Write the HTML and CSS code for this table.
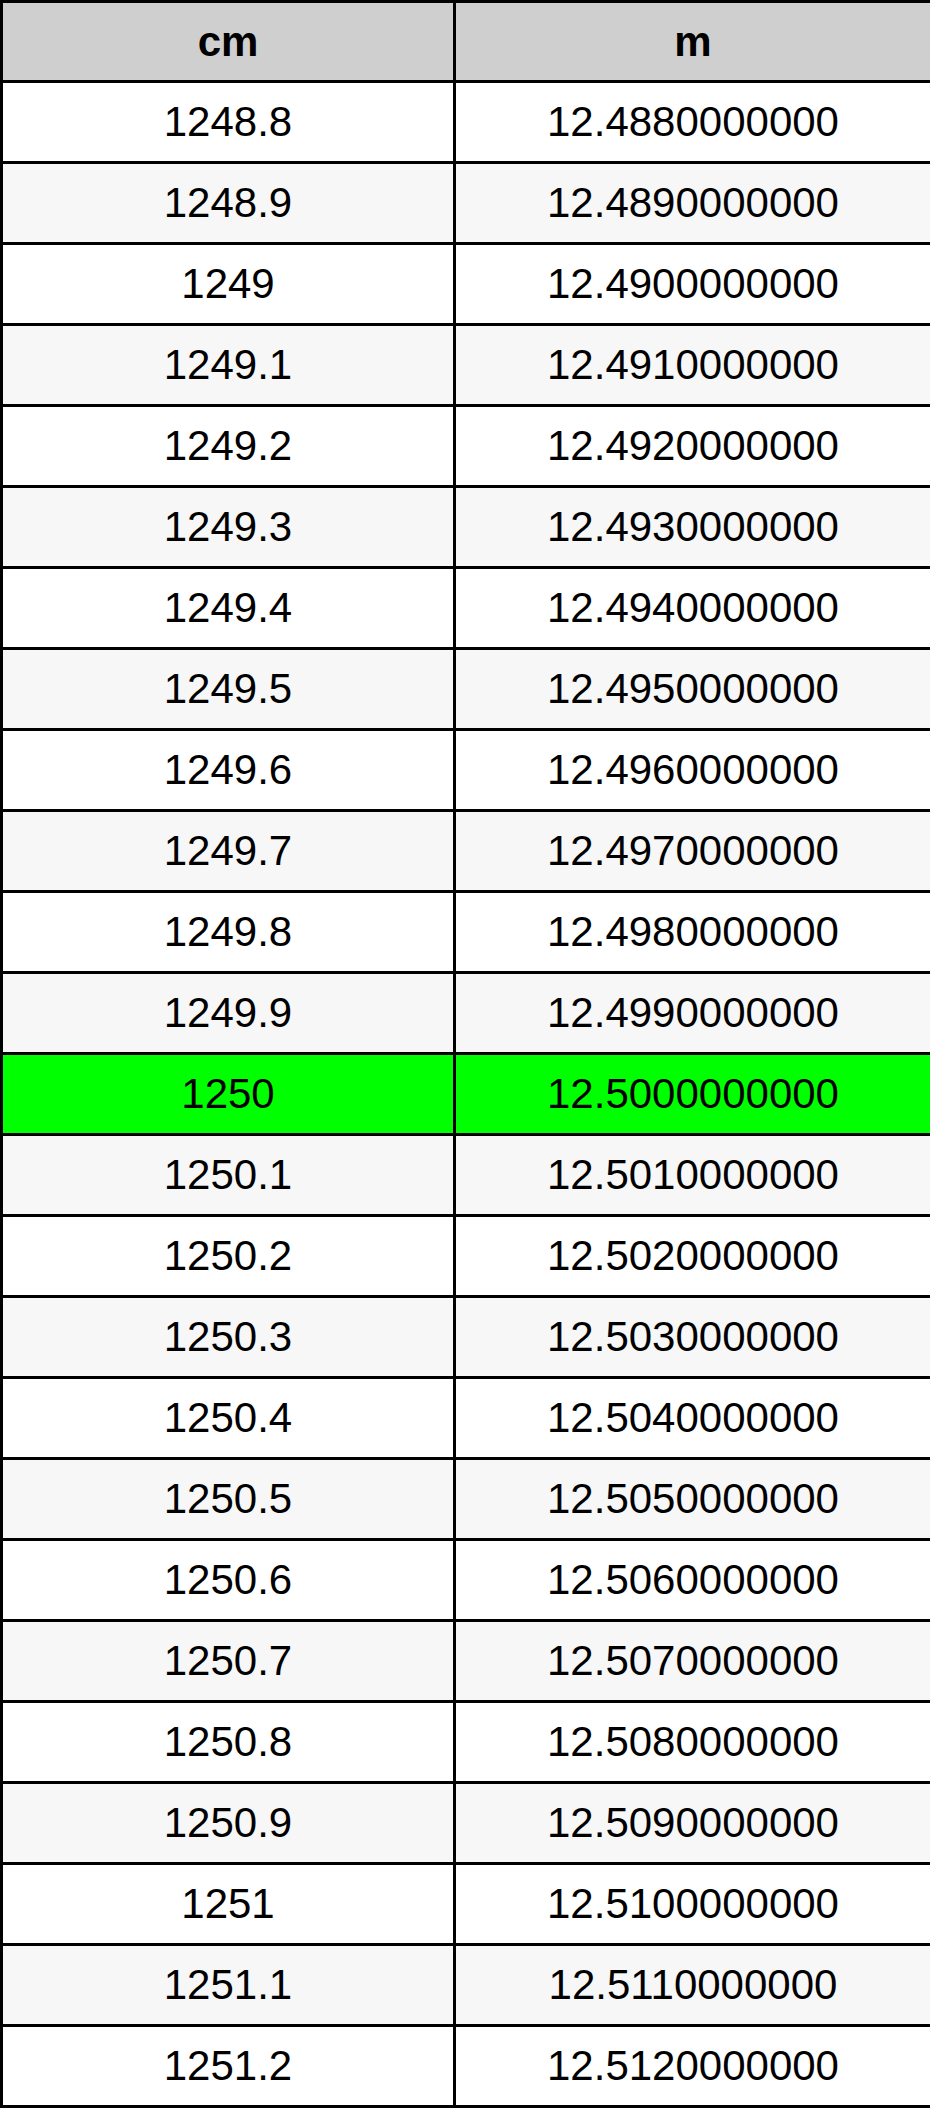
FILE: index.html
```html
<!DOCTYPE html>
<html>
<head>
<meta charset="utf-8">
<title>cm to m</title>
<link rel="stylesheet" href="styles.css">
</head>
<body>
<table class="conv">
<colgroup><col class="c1"><col class="c2"></colgroup>
<thead>
<tr><th>cm</th><th>m</th></tr>
</thead>
<tbody>
<tr><td>1248.8</td><td>12.4880000000</td></tr>
<tr><td>1248.9</td><td>12.4890000000</td></tr>
<tr><td>1249</td><td>12.4900000000</td></tr>
<tr><td>1249.1</td><td>12.4910000000</td></tr>
<tr><td>1249.2</td><td>12.4920000000</td></tr>
<tr><td>1249.3</td><td>12.4930000000</td></tr>
<tr><td>1249.4</td><td>12.4940000000</td></tr>
<tr><td>1249.5</td><td>12.4950000000</td></tr>
<tr><td>1249.6</td><td>12.4960000000</td></tr>
<tr><td>1249.7</td><td>12.4970000000</td></tr>
<tr><td>1249.8</td><td>12.4980000000</td></tr>
<tr><td>1249.9</td><td>12.4990000000</td></tr>
<tr class="hl"><td>1250</td><td>12.5000000000</td></tr>
<tr><td>1250.1</td><td>12.5010000000</td></tr>
<tr><td>1250.2</td><td>12.5020000000</td></tr>
<tr><td>1250.3</td><td>12.5030000000</td></tr>
<tr><td>1250.4</td><td>12.5040000000</td></tr>
<tr><td>1250.5</td><td>12.5050000000</td></tr>
<tr><td>1250.6</td><td>12.5060000000</td></tr>
<tr><td>1250.7</td><td>12.5070000000</td></tr>
<tr><td>1250.8</td><td>12.5080000000</td></tr>
<tr><td>1250.9</td><td>12.5090000000</td></tr>
<tr><td>1251</td><td>12.5100000000</td></tr>
<tr><td>1251.1</td><td>12.5110000000</td></tr>
<tr><td>1251.2</td><td>12.5120000000</td></tr>
</tbody>
</table>
</body>
</html>
```
FILE: styles.css
```css
html, body {
  margin: 0;
  padding: 0;
  background: #ffffff;
}
.conv {
  width: 930px;
  border-collapse: collapse;
  table-layout: fixed;
  border: 3px solid #000;
  font-family: "Liberation Sans", Arial, sans-serif;
  font-size: 42px;
  color: #000;
}
.conv .c1 { width: 453px; }
.conv .c2 { width: 477px; }
.conv th,
.conv td {
  border: 3px solid #000;
  padding: 0;
  height: 78px;
  text-align: center;
  vertical-align: middle;
  line-height: 1;
}
.conv th {
  background: #cfcfcf;
  font-weight: bold;
  height: 77px;
}
.conv tbody tr:nth-child(odd) td { background: #ffffff; }
.conv tbody tr:nth-child(even) td { background: #f7f7f7; }
.conv tbody tr.hl td { background: #00ff00; }
```
